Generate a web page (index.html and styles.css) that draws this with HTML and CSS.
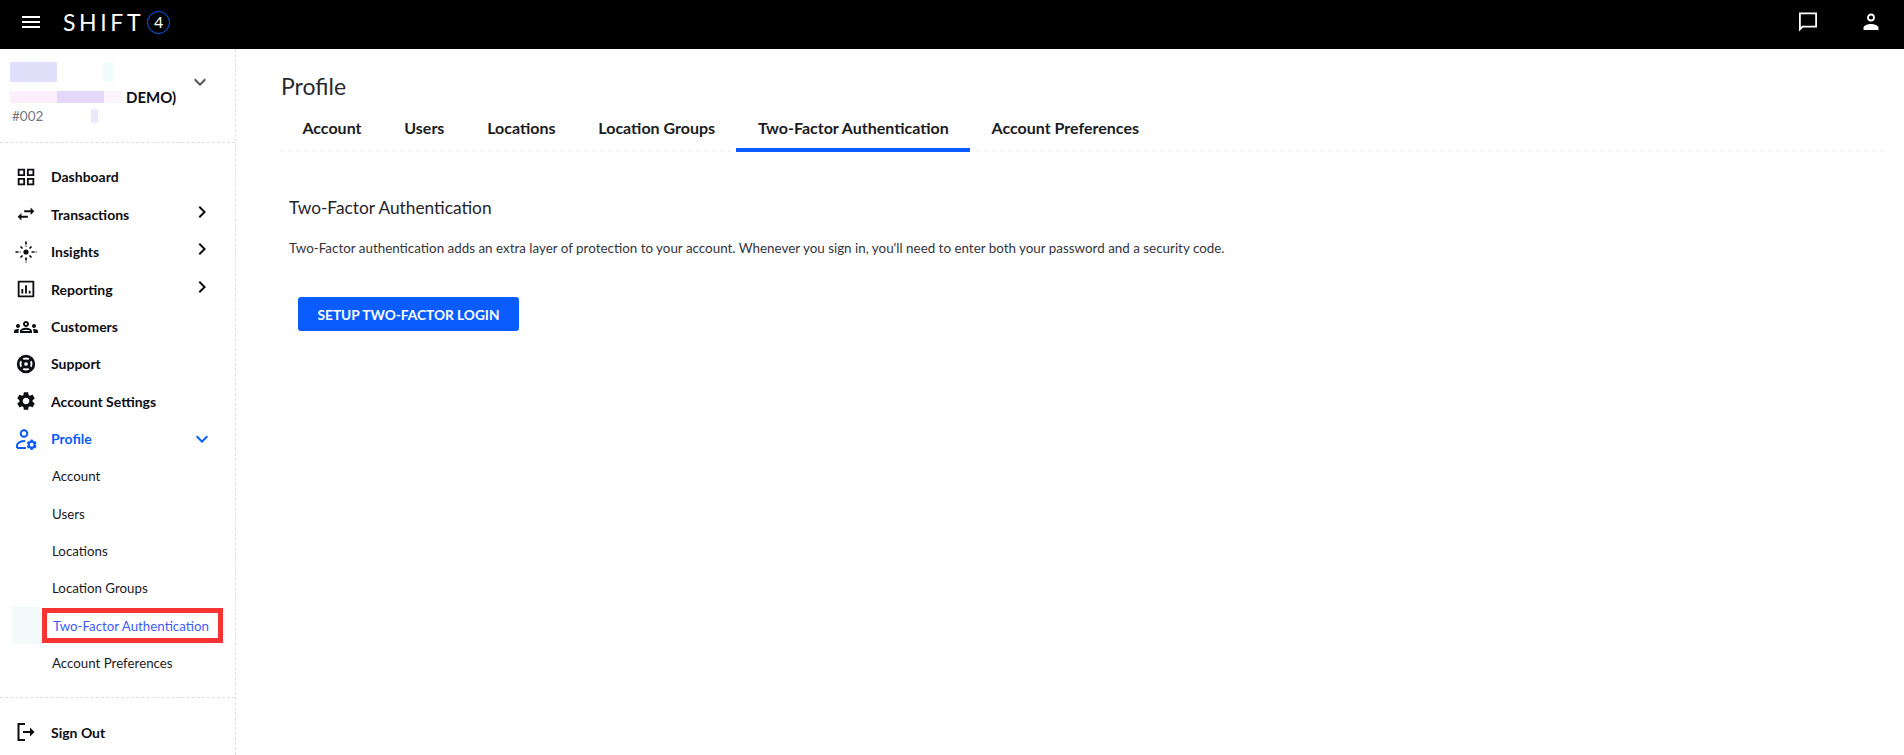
FILE: index.html
```html
<!DOCTYPE html>
<html lang="en">
<head>
<meta charset="utf-8">
<title>Profile</title>
<link rel="stylesheet" href="styles.css">
</head>
<body>
<header class="topbar">
  <svg class="menu-icon" viewBox="0 0 24 24"><path d="M3 18h18v-2H3v2zm0-5h18v-2H3v2zm0-7v2h18V6H3z"/></svg>
  <div class="logo"><span class="logo-word">SHIFT</span><span class="logo-four">4</span></div>
  <div class="top-actions">
    <svg class="top-icon" viewBox="0 0 24 24"><path d="M21 2.500H3v19l4-4h14zM19.200 4.300v11.400H6.200l-1.400 1.400V4.300z" fill-rule="evenodd"/></svg>
    <svg class="top-icon" viewBox="0 0 24 24"><circle cx="12" cy="7.500" r="3" fill="none" stroke="#fff" stroke-width="1.800"/><path d="M4.500 20v-2.200c0-2.400 4.600-3.800 7.500-3.800s7.500 1.400 7.500 3.800V20z"/></svg>
  </div>
</header>
<div class="shell">
  <aside class="sidebar">
    <div class="account">
      <div class="account-info">
        <div class="blur-row"><span class="patch patch-lav"></span><span class="patch patch-cyan"></span></div>
        <div class="name-row"><span class="patch patch-pink"></span><span class="patch patch-purple"></span><span class="patch patch-pink2"></span><span class="demo">DEMO)</span></div>
        <div class="id-row"><span>#002</span><span class="patch patch-id"></span></div>
      </div>
      <svg class="account-chevron" viewBox="0 0 24 24"><path d="M7.410 8.590 12 13.170l4.590-4.580L18 10l-6 6-6-6z"/></svg>
    </div>
    <nav class="nav">
      <a class="nav-row"><svg class="nav-icon icon-m" viewBox="0 0 24 24"><path fill-rule="evenodd" d="M3 3h8v8H3zm2 2v4h4V5zM13 3h8v8h-8zm2 2v4h4V5zM3 13h8v8H3zm2 2v4h4v-4zM13 13h8v8h-8zm2 2v4h4v-4z"/></svg><span>Dashboard</span></a>
      <a class="nav-row"><svg class="nav-icon icon-m" viewBox="0 0 24 24"><path d="M6.990 11 3 15l3.990 4v-3H14v-2H6.990zM21 9l-3.990-4v3H10v2h7.010v3z"/></svg><span>Transactions</span><svg class="chev" viewBox="0 0 24 24"><path d="M8.590 16.590 13.170 12 8.590 7.410 10 6l6 6-6 6z"/></svg></a>
      <a class="nav-row"><svg class="nav-icon" viewBox="0 0 24 24"><circle cx="12" cy="12" r="2.600"/><path class="rays" d="M12 1.500v5M12 17.500v5M1.500 12h5M17.500 12h5M6.500 6.500l2 2M15.500 15.500l2 2M17.500 6.500l-2 2M8.500 15.500l-2 2"/></svg><span>Insights</span><svg class="chev" viewBox="0 0 24 24"><path d="M8.590 16.590 13.170 12 8.590 7.410 10 6l6 6-6 6z"/></svg></a>
      <a class="nav-row"><svg class="nav-icon icon-m" viewBox="0 0 24 24"><path fill-rule="evenodd" d="M4 3h16a1 1 0 0 1 1 1v16a1 1 0 0 1-1 1H4a1 1 0 0 1-1-1V4a1 1 0 0 1 1-1zm1 2v14h14V5z"/><path d="M7 12h2v5H7zM11 8h2v9h-2zM15 14h2v3h-2z"/></svg><span>Reporting</span><svg class="chev" viewBox="0 0 24 24"><path d="M8.590 16.590 13.170 12 8.590 7.410 10 6l6 6-6 6z"/></svg></a>
      <a class="nav-row"><svg class="nav-icon" viewBox="0 0 24 24"><path d="M4 13c1.100 0 2-.9 2-2s-.9-2-2-2-2 .9-2 2 .9 2 2 2zm1.130 1.100c-.37-.06-.74-.1-1.130-.1-.99 0-1.930.21-2.780.58C.48 14.900 0 15.620 0 16.430V18h4.500v-1.610c0-.83.23-1.610.63-2.290zM20 13c1.100 0 2-.9 2-2s-.9-2-2-2-2 .9-2 2 .9 2 2 2zm4 3.430c0-.81-.48-1.530-1.220-1.850-.85-.37-1.790-.58-2.780-.58-.39 0-.76.04-1.130.1.4.68.63 1.460.63 2.290V18H24v-1.570zm-7.760-2.780c-1.170-.52-2.610-.9-4.240-.9-1.630 0-3.070.39-4.240.9C6.680 14.130 6 15.210 6 16.390V18h12v-1.610c0-1.180-.68-2.260-1.760-2.740zM8.070 16c.09-.23.13-.39.91-.69.97-.38 1.990-.56 3.020-.56s2.050.18 3.020.56c.77.3.81.46.91.69H8.070zM12 8c.55 0 1 .45 1 1s-.45 1-1 1-1-.45-1-1 .45-1 1-1m0-2c-1.660 0-3 1.340-3 3s1.340 3 3 3 3-1.340 3-3-1.340-3-3-3z"/></svg><span>Customers</span></a>
      <a class="nav-row"><svg class="nav-icon icon-m" viewBox="0 0 24 24"><circle cx="12" cy="12" r="8.500" class="ring"/><circle cx="12" cy="12" r="3.500" class="ring"/><path class="ring" d="M6 6l3.500 3.500M18 6l-3.500 3.500M6 18l3.500-3.500M18 18l-3.500-3.500"/></svg><span>Support</span></a>
      <a class="nav-row"><svg class="nav-icon icon-m" viewBox="0 0 24 24"><path d="M19.140 12.940c.04-.3.06-.61.06-.94 0-.32-.02-.64-.07-.94l2.030-1.580c.18-.14.23-.41.12-.61l-1.920-3.320c-.12-.22-.37-.29-.59-.22l-2.390.96c-.5-.38-1.030-.7-1.620-.94l-.36-2.540c-.04-.24-.24-.41-.48-.41h-3.840c-.24 0-.43.17-.47.41l-.36 2.540c-.59.24-1.130.57-1.620.94l-2.390-.96c-.22-.08-.47 0-.59.22L2.740 8.870c-.12.21-.08.47.12.61l2.030 1.580c-.05.3-.09.63-.09.94s.02.64.07.94l-2.030 1.580c-.18.14-.23.41-.12.61l1.920 3.320c.12.22.37.29.59.22l2.390-.96c.5.38 1.030.7 1.620.94l.36 2.540c.05.24.24.41.48.41h3.840c.24 0 .44-.17.47-.41l.36-2.540c.59-.24 1.130-.56 1.620-.94l2.390.96c.22.08.47 0 .59-.22l1.920-3.320c.12-.22.07-.47-.12-.61l-2.010-1.580zM12 15.600c-1.980 0-3.600-1.620-3.600-3.600s1.620-3.600 3.600-3.600 3.600 1.620 3.600 3.600-1.620 3.600-3.600 3.600z"/></svg><span>Account Settings</span></a>
      <a class="nav-row nav-active"><svg class="nav-icon" viewBox="0 0 24 24"><circle cx="10" cy="6.500" r="3.300" class="line"/><path class="line" d="M3 21v-2.500c0-2.500 3.500-4.500 8-4.500"/><path class="line" d="M3 21h9"/><path fill-rule="evenodd" d="M18.500 12.500l1 1.700 2 0 1 1.800-1 1.700 1 1.700-1 1.800-2 0-1 1.700h-1.600l-1-1.700-2 0-1-1.800 1-1.700-1-1.700 1-1.800 2 0 1-1.700zM17.700 15.800a1.900 1.900 0 1 0 0 3.800 1.900 1.900 0 0 0 0-3.800z"/></svg><span>Profile</span><svg class="chev" viewBox="0 0 24 24"><path d="M7.410 8.590 12 13.170l4.590-4.580L18 10l-6 6-6-6z"/></svg></a>
      <a class="sub-row">Account</a>
      <a class="sub-row">Users</a>
      <a class="sub-row">Locations</a>
      <a class="sub-row">Location Groups</a>
      <a class="sub-row sub-current"><span class="sub-fade"></span><span class="sub-marked">Two-Factor Authentication</span></a>
      <a class="sub-row">Account Preferences</a>
    </nav>
    <div class="sidebar-foot">
      <a class="nav-row"><svg class="nav-icon" viewBox="0 0 24 24"><path d="M11 3H3.500v18H11v-2H5.500V5H11z"/><path d="M16 7.500 20.500 12 16 16.500v-3.500H9v-2h7z"/></svg><span>Sign Out</span></a>
    </div>
  </aside>
  <main class="main">
    <h1 class="page-title">Profile</h1>
    <div class="tabs">
      <a class="tab">Account</a>
      <a class="tab">Users</a>
      <a class="tab">Locations</a>
      <a class="tab">Location Groups</a>
      <a class="tab tab-active">Two-Factor Authentication</a>
      <a class="tab">Account Preferences</a>
    </div>
    <section class="panel">
      <h2 class="panel-title">Two-Factor Authentication</h2>
      <p class="panel-text">Two-Factor authentication adds an extra layer of protection to your account. Whenever you sign in, you'll need to enter both your password and a security code.</p>
      <button class="primary-btn">SETUP TWO-FACTOR LOGIN</button>
    </section>
  </main>
</div>
</body>
</html>
```
FILE: styles.css
```css
*, *::after { box-sizing: border-box; }
html, body { margin: 0; height: 100%; }
body {
  display: flex;
  flex-direction: column;
  height: 755px;
  overflow: hidden;
  background: #fff;
  color: #0d0d14;
  font-family: "Lato", "Open Sans", sans-serif;
}
.topbar {
  flex: 0 0 49px;
  display: flex;
  align-items: center;
  background: #000;
  padding-left: 19px;
}
.menu-icon { width: 24px; height: 24px; fill: #fff; margin-top: -5px; }
.logo { display: flex; align-items: center; margin-left: 20px; margin-top: -5px; }
.logo-word { color: #fff; font-weight: 400; font-size: 23px; letter-spacing: 3.600px; line-height: 30px; }
.logo-four {
  width: 23px; height: 23px; margin-left: 3px;
  border: 1.500px solid #0a5cff; border-radius: 50%;
  color: #fff; font-size: 16px; font-weight: 400; line-height: 20px; text-align: center;
}
.top-actions { margin-left: auto; display: flex; gap: 39px; padding-right: 21px; margin-top: -5px; }
.top-icon { width: 24px; height: 24px; fill: #fff; }

.shell { flex: 1; display: flex; min-height: 0; }
.sidebar {
  flex: 0 0 236px;
  border-right: 1px dashed #dcdcf6;
  display: flex;
  flex-direction: column;
}
.account {
  height: 94px;
  display: flex;
  padding: 13px 0 0 10px;
  border-bottom: 1px dashed #dcdcf6;
}
.blur-row { display: flex; gap: 46px; height: 20px; }
.patch { display: block; }
.patch-lav { width: 47px; height: 20px; background: #dfdffa; }
.patch-cyan { width: 10px; height: 20px; background: #eefcfb; }
.name-row { display: flex; align-items: center; height: 20px; margin-top: 5px; }
.patch-pink { width: 47px; height: 12px; background: #fbeffc; }
.patch-purple { width: 47px; height: 12px; background: #e5d9f9; }
.patch-pink2 { width: 18px; height: 12px; background: #fdf5fd; }
.demo { font-size: 15px; font-weight: 700; margin-left: 4px; line-height: 20px; }
.id-row { display: flex; align-items: center; height: 20px; margin-top: -1px; padding-left: 2px; color: #77777f; font-size: 13.500px; }
.patch-id { width: 7px; height: 14px; margin-left: 48px; background: #e9e9fb; }
.account-chevron { width: 24px; height: 24px; fill: #555; margin: 8px 23px 0 auto; }

.nav { padding-top: 15.300px; display: flex; flex-direction: column; }
.nav-row {
  height: 37.400px;
  display: flex;
  align-items: center;
  padding-left: 14px;
  font-size: 14px;
  font-weight: 700;
  color: #0d0d14;
}
.nav-icon { width: 24px; height: 24px; flex: none; margin-right: 13px; fill: #0d0d14; }
.icon-m { transform: scale(.92); }
.rays { fill: none; stroke: #0d0d14; stroke-width: 1.700; stroke-dasharray: 3 1.200; }
.ring { fill: none; stroke: #0d0d14; stroke-width: 3; }
.line { fill: none; stroke: #0a5cff; stroke-width: 2; }
.chev { width: 24px; height: 24px; fill: #0d0d14; margin: -5px 21px 0 auto; }
.nav-active { color: #0a5cff; }
.nav-active .nav-icon, .nav-active .chev { fill: #0a5cff; }
.nav-active .chev { margin-top: 1px; }
.sub-row {
  height: 37.400px;
  display: flex;
  align-items: center;
  padding-left: 52px;
  font-size: 13.300px;
  color: #1a1a24;
  position: relative;
}
.sub-current { color: #3f5cf5; }
.sub-marked { position: relative; margin-left: 1px; line-height: 20px; }
.sub-marked::after {
  content: "";
  position: absolute;
  left: -11px; top: -7.500px;
  width: 181px; height: 35px;
  border: 5px solid #f53333;
}
.sub-fade { position: absolute; left: 12px; top: 0; width: 30px; height: 37px; background: #f2fbfa; }
.sidebar-foot {
  margin-top: 15.700px;
  border-top: 1px dashed #dcdcf6;
  padding-top: 15px;
}

.main { flex: 1; min-width: 0; padding: 22px 0 0 45px; }
.page-title { margin: 0; font-size: 23px; line-height: 30px; font-weight: 400; color: #2a2a30; }
.tabs {
  display: flex;
  height: 51px;
  margin-right: 17px;
  background: linear-gradient(to right, #d6d6d6 1px, transparent 1px) left bottom / 8px 1px repeat-x;
}
.tab {
  height: 51px;
  padding: 17px 21.400px 0;
  font-size: 16px;
  line-height: 20px;
  font-weight: 700;
  color: #1b1b22;
  border-bottom: 4px solid transparent;
}
.tab-active { border-bottom-color: #0a5cff; }
.panel { padding: 44px 0 0 8px; }
.panel-title { margin: 0; font-size: 17.300px; line-height: 24px; font-weight: 400; color: #24242a; }
.panel-text { margin: 18px 0 0; font-size: 13.400px; line-height: 20px; color: #35353d; }
.primary-btn {
  display: block;
  margin: 39px 0 0 9px;
  width: 221px;
  height: 34px;
  border: 0;
  border-radius: 3px;
  background: #0a5cff;
  color: #fff;
  font-family: inherit;
  font-size: 13.700px;
  font-weight: 700;
}
```
